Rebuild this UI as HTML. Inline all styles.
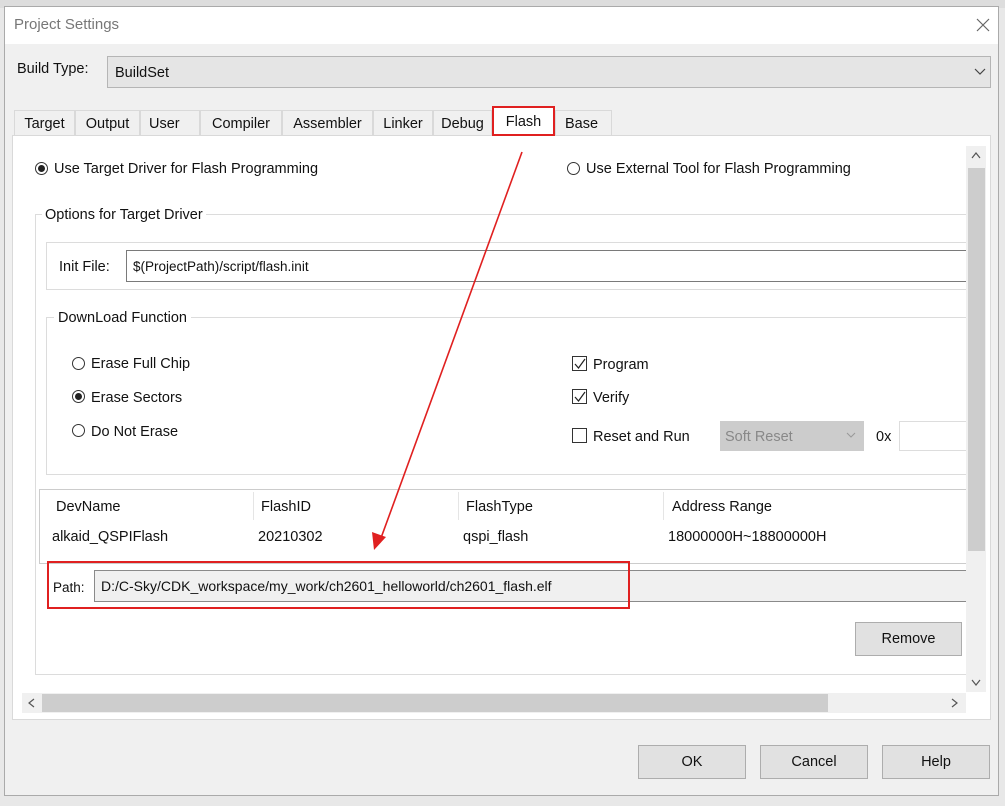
<!DOCTYPE html>
<html><head><style>
*{box-sizing:border-box;margin:0;padding:0}
body{width:1005px;height:806px;background:#e8e8e8;font-family:"Liberation Sans","Noto Sans CJK SC",sans-serif;font-size:14.5px;color:#111;position:relative;overflow:hidden}
.a{position:absolute}
.t{position:absolute;white-space:nowrap;line-height:16px}
.tab{position:absolute;top:110px;height:25px;border:1px solid #d9d9d9;border-bottom:none;background:#f0f0f0;padding:5px 0 0 0;text-align:center}
.rb{position:absolute;width:13px;height:13px;border:1px solid #333;border-radius:50%;background:#fff}
.rb.on::after{content:"";position:absolute;left:2px;top:2px;width:7px;height:7px;border-radius:50%;background:#222}
.cb{position:absolute;width:15px;height:15px;border:1px solid #333;background:#fff}
.btn{position:absolute;background:#e1e1e1;border:1px solid #adadad;text-align:center;line-height:32px}
.grp{position:absolute;border:1px solid #dcdcdc}
</style></head><body>
<div class="a" style="left:0;top:0;width:1005px;height:8px;background:#ddd"></div>
<div class="a" style="left:4px;top:6px;width:995px;height:790px;background:#f0f0f0;border:1px solid #aaa"></div>
<div class="a" style="left:5px;top:7px;width:993px;height:37px;background:#fff"></div>
<div class="t" style="left:14px;top:17px;color:#777;font-size:15px">Project Settings</div>
<svg class="a" style="left:976px;top:18px" width="14" height="14"><path d="M1 1L13 13M13 1L1 13" stroke="#666" stroke-width="1.2"/></svg>
<div class="t" style="left:17px;top:61px">Build Type:</div>
<div class="a" style="left:107px;top:56px;width:884px;height:32px;background:#e5e5e5;border:1px solid #b5b5b5"></div>
<div class="t" style="left:115px;top:65px">BuildSet</div>
<svg class="a" style="left:974px;top:68px" width="12" height="8"><path d="M1 1L6 6L11 1" stroke="#444" fill="none" stroke-width="1.2"/></svg>

<div class="a" style="left:12px;top:135px;width:979px;height:585px;background:#fff;border:1px solid #d9d9d9"></div>
<div class="tab" style="left:14px;width:61px">Target</div>
<div class="tab" style="left:75px;width:65px">Output</div>
<div class="tab" style="left:140px;width:60px;text-align:left;padding-left:8px">User</div>
<div class="tab" style="left:200px;width:82px">Compiler</div>
<div class="tab" style="left:282px;width:91px">Assembler</div>
<div class="tab" style="left:373px;width:60px">Linker</div>
<div class="tab" style="left:433px;width:59px">Debug</div>
<div class="tab" style="left:492px;top:106px;height:30px;width:63px;background:#fff;border:2px solid #e02020;padding-top:6px">Flash</div>
<div class="tab" style="left:555px;width:57px;text-align:left;padding-left:9px">Base</div>

<div class="rb on" style="left:35px;top:162px"></div>
<div class="t" style="left:54px;top:161px">Use Target Driver for Flash Programming</div>
<div class="rb" style="left:567px;top:162px"></div>
<div class="t" style="left:586px;top:161px">Use External Tool for Flash Programming</div>

<div class="grp" style="left:35px;top:214px;width:940px;height:461px"></div>
<div class="t" style="left:42px;top:207px;background:#fff;padding:0 3px">Options for Target Driver</div>
<div class="grp" style="left:46px;top:242px;width:925px;height:48px"></div>
<div class="t" style="left:59px;top:259px">Init File:</div>
<div class="a" style="left:126px;top:250px;width:845px;height:32px;border:1px solid #7a7a7a;background:#fff"></div>
<div class="t" style="left:133px;top:259px;font-size:13.5px">$(ProjectPath)/script/flash.init</div>

<div class="grp" style="left:46px;top:317px;width:925px;height:158px"></div>
<div class="t" style="left:54px;top:310px;background:#fff;padding:0 4px">DownLoad Function</div>
<div class="rb" style="left:72px;top:357px"></div><div class="t" style="left:91px;top:356px">Erase Full Chip</div>
<div class="rb on" style="left:72px;top:390px"></div><div class="t" style="left:91px;top:390px">Erase Sectors</div>
<div class="rb" style="left:72px;top:424px"></div><div class="t" style="left:91px;top:424px">Do Not Erase</div>
<div class="cb" style="left:572px;top:356px"></div><svg class="a" style="left:574px;top:358px" width="12" height="11"><path d="M1 6L4.5 10L11 1" stroke="#222" fill="none" stroke-width="1.2"/></svg><div class="t" style="left:593px;top:357px">Program</div>
<div class="cb" style="left:572px;top:389px"></div><svg class="a" style="left:574px;top:391px" width="12" height="11"><path d="M1 6L4.5 10L11 1" stroke="#222" fill="none" stroke-width="1.2"/></svg><div class="t" style="left:593px;top:390px">Verify</div>
<div class="cb" style="left:572px;top:428px"></div><div class="t" style="left:593px;top:429px">Reset and Run</div>
<div class="a" style="left:720px;top:421px;width:144px;height:30px;background:#ccc"></div>
<div class="t" style="left:725px;top:429px;color:#888">Soft Reset</div>
<svg class="a" style="left:846px;top:432px" width="10" height="7"><path d="M1 1L5 5L9 1" stroke="#999" fill="none"/></svg>
<div class="t" style="left:876px;top:429px">0x</div>
<div class="a" style="left:899px;top:421px;width:70px;height:30px;background:#fff;border:1px solid #ddd"></div>

<div class="a" style="left:39px;top:489px;width:930px;height:75px;border:1px solid #ccc;border-right:none;border-bottom:none"></div>
<div class="a" style="left:253px;top:492px;width:1px;height:28px;background:#e5e5e5"></div>
<div class="a" style="left:458px;top:492px;width:1px;height:28px;background:#e5e5e5"></div>
<div class="a" style="left:663px;top:492px;width:1px;height:28px;background:#e5e5e5"></div>
<div class="t" style="left:56px;top:499px">DevName</div>
<div class="t" style="left:261px;top:499px">FlashID</div>
<div class="t" style="left:466px;top:499px">FlashType</div>
<div class="t" style="left:672px;top:499px">Address Range</div>
<div class="t" style="left:52px;top:529px">alkaid_QSPIFlash</div>
<div class="t" style="left:258px;top:529px">20210302</div>
<div class="t" style="left:463px;top:529px">qspi_flash</div>
<div class="t" style="left:668px;top:529px">18000000H~18800000H</div>
<div class="a" style="left:39px;top:563px;width:930px;height:1px;background:#ccc"></div>
<div class="t" style="left:53px;top:580px;font-size:13.5px">Path:</div>
<div class="a" style="left:94px;top:570px;width:875px;height:32px;border:1px solid #8a8a8a;background:#f0f0f0"></div>
<div class="t" style="left:101px;top:578px;font-size:14px">D:/C-Sky/CDK_workspace/my_work/ch2601_helloworld/ch2601_flash.elf</div>
<div class="a" style="left:47px;top:561px;width:583px;height:48px;border:2px solid #e02020"></div>
<div class="btn" style="left:855px;top:622px;width:107px;height:34px">Remove</div>

<div class="a" style="left:966px;top:146px;width:20px;height:546px;background:#f0f0f0"></div>
<div class="a" style="left:968px;top:168px;width:17px;height:383px;background:#cdcdcd"></div>
<svg class="a" style="left:971px;top:152px" width="10" height="7"><path d="M1 6L5 1L9 6" stroke="#555" fill="none" stroke-width="1.2"/></svg>
<svg class="a" style="left:971px;top:679px" width="10" height="7"><path d="M1 1L5 6L9 1" stroke="#555" fill="none" stroke-width="1.2"/></svg>
<div class="a" style="left:22px;top:693px;width:944px;height:20px;background:#f0f0f0"></div>
<div class="a" style="left:42px;top:694px;width:786px;height:18px;background:#cdcdcd"></div>
<svg class="a" style="left:28px;top:698px" width="7" height="10"><path d="M6 1L1 5L6 9" stroke="#555" fill="none" stroke-width="1.2"/></svg>
<svg class="a" style="left:951px;top:698px" width="7" height="10"><path d="M1 1L6 5L1 9" stroke="#555" fill="none" stroke-width="1.2"/></svg>

<div class="btn" style="left:638px;top:745px;width:108px;height:34px">OK</div>
<div class="btn" style="left:760px;top:745px;width:108px;height:34px">Cancel</div>
<div class="btn" style="left:882px;top:745px;width:108px;height:34px">Help</div>

<svg class="a" style="left:0;top:0" width="1005" height="806">
<line x1="522" y1="152" x2="381" y2="538" stroke="#e02020" stroke-width="1.6"/>
<polygon points="374,550 372,532 386,537" fill="#e02020"/>
</svg>
</body></html>
